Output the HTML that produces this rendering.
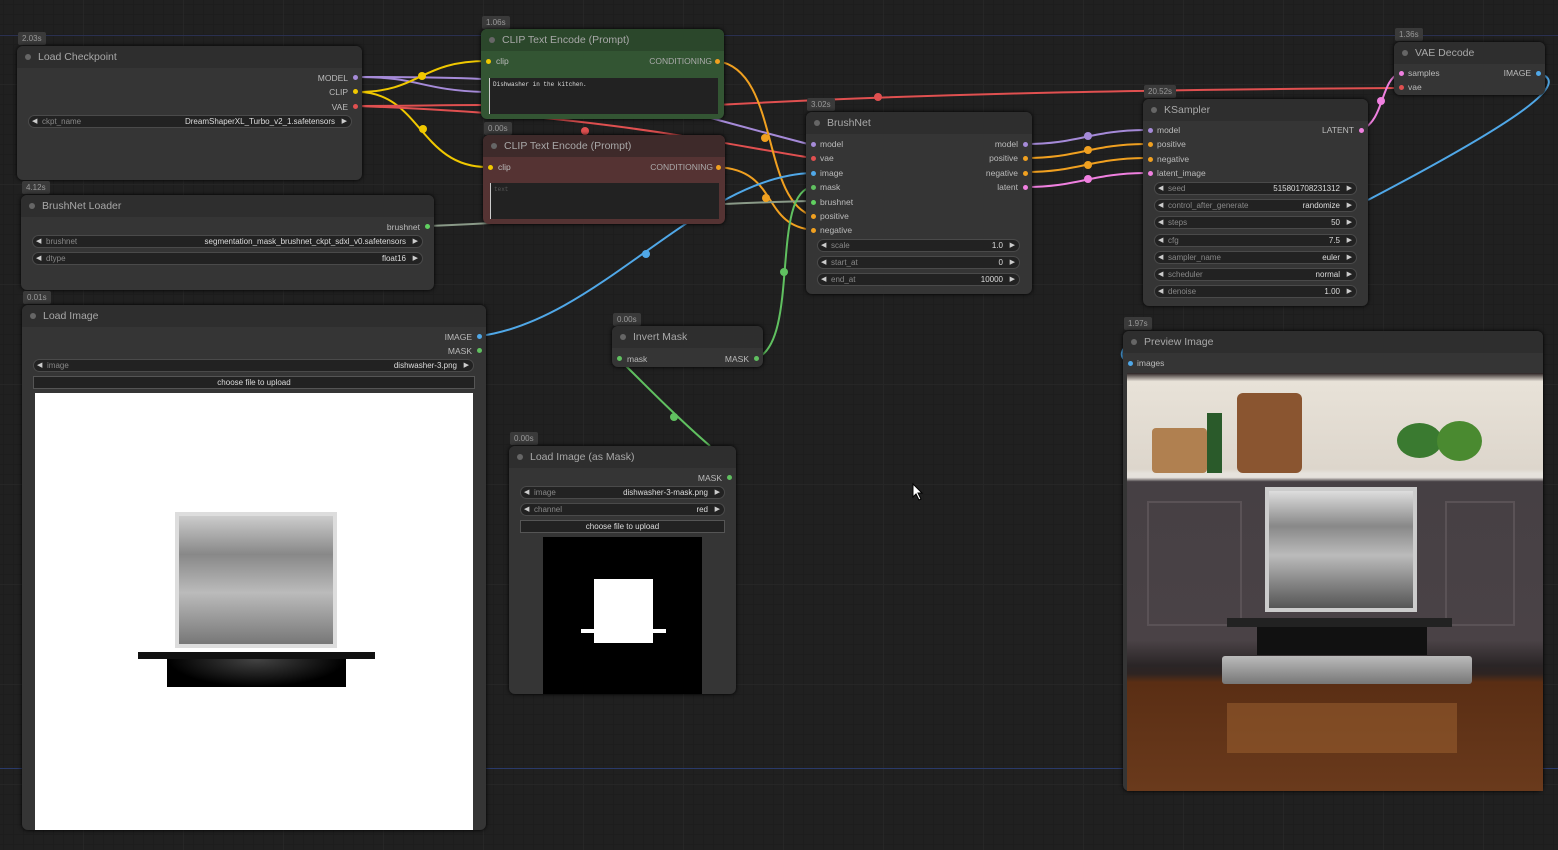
<!DOCTYPE html>
<html><head><meta charset="utf-8"><style>
*{margin:0;padding:0;box-sizing:border-box}
body{width:1558px;height:850px;overflow:hidden;background:#202020;font-family:"Liberation Sans",sans-serif;position:relative;
background-image:linear-gradient(#262626 1px,transparent 1px),linear-gradient(90deg,#262626 1px,transparent 1px),linear-gradient(#1d1d1d 1px,transparent 1px),linear-gradient(90deg,#1d1d1d 1px,transparent 1px);
background-size:100px 100px,100px 100px,10px 10px,10px 10px;background-position:-17px -16px,-17px -16px,-7px -6px,-7px -6px}
.n{position:absolute;background:#353535;border-radius:6px;box-shadow:0 0 4px #000}
.t{height:22px;background:#2e2e2e;border-radius:6px 6px 0 0;color:#a8a8a8;font-size:10.5px;line-height:22px;padding-left:21px;position:relative}
.t:before{content:"";position:absolute;left:8px;top:8px;width:6px;height:6px;border-radius:50%;background:#666}
.b{position:absolute;background:#3a3a3a;color:#999;font-size:8px;height:13px;line-height:13px;padding:0 4px;border-radius:2px}
.s{position:absolute;font-size:8.5px;color:#bbb;line-height:10px}
.d{position:absolute;width:5px;height:5px;border-radius:50%}
.w{position:absolute;height:13px;background:#222;border:1px solid #4a4a4a;border-radius:7px;font-size:8px;line-height:11px;color:#888}
.w .l{position:absolute;left:13px}.w .v{position:absolute;right:16px;color:#ddd}
.w:before{content:"◀";position:absolute;left:3px;color:#ccc;font-size:7px}
.w:after{content:"▶";position:absolute;right:4px;color:#ccc;font-size:7px}
.btn{position:absolute;height:13px;background:#222;border:1px solid #555;font-size:8px;line-height:11px;color:#ddd;text-align:center}
</style></head><body>
<div style="position:absolute;left:0;top:35px;width:1558px;height:1px;background:#2a3050"></div>
<div style="position:absolute;left:0;top:768px;width:1558px;height:1px;background:#2a3a6a"></div>

<svg style="position:absolute;left:0;top:0" width="1558" height="850" fill="none" stroke-width="2">
<path d="M358 77 C420 77,420 90,484 92" stroke="#a58ad8"/>
<path d="M358 77 C600 77,600 90,808 144" stroke="#a58ad8"/>
<path d="M358 92 C420 92,420 61,487 61" stroke="#f0c800"/>
<path d="M358 92 C420 92,420 167,487 167" stroke="#f0c800"/>
<path d="M358 106 C420 106,430 105,484 105" stroke="#e05050"/>
<path d="M358 106 C600 115,700 140,812 158" stroke="#e05050"/>
<path d="M716 105 C900 95,1100 90,1400 88" stroke="#e05050"/>
<path d="M717 61 C780 70,760 200,813 216" stroke="#f0a020"/>
<path d="M717 167 C780 170,760 225,813 230" stroke="#f0a020"/>
<path d="M428 226 C600 220,620 205,813 201" stroke="#8a9a88"/>
<path d="M480 336 C600 320,700 175,813 173" stroke="#50a8e8"/>
<path d="M757 358 C800 340,770 190,813 187" stroke="#60c060"/>
<path d="M618 358 C650 390,680 420,710 446" stroke="#60c060"/>
<path d="M1025 144 C1080 144,1090 130,1148 130" stroke="#a58ad8"/>
<path d="M1025 158 C1080 158,1090 144,1148 144" stroke="#f0a020"/>
<path d="M1025 172 C1080 172,1090 158,1148 158" stroke="#f0a020"/>
<path d="M1025 187 C1080 187,1090 173,1148 173" stroke="#f080e0"/>
<path d="M1361 130 C1385 120,1380 80,1400 73" stroke="#f080e0"/>
<path d="M1537 73 C1570 80,1540 110,1368 200" stroke="#50a8e8"/>
<path d="M1133 341 C1118 350,1118 360,1133 363" stroke="#50a8e8"/>
<g stroke="none">
<circle cx="422" cy="76" r="4" fill="#f0c800"/><circle cx="423" cy="129" r="4" fill="#f0c800"/>
<circle cx="585" cy="131" r="4" fill="#e05050"/><circle cx="878" cy="97" r="4" fill="#e05050"/>
<circle cx="765" cy="138" r="4" fill="#f0a020"/><circle cx="766" cy="198" r="4" fill="#f0a020"/>
<circle cx="646" cy="254" r="4" fill="#50a8e8"/><circle cx="784" cy="272" r="4" fill="#60c060"/>
<circle cx="674" cy="417" r="4" fill="#60c060"/>
<circle cx="1088" cy="136" r="4" fill="#a58ad8"/><circle cx="1088" cy="150" r="4" fill="#f0a020"/>
<circle cx="1088" cy="165" r="4" fill="#f0a020"/><circle cx="1088" cy="179" r="4" fill="#f080e0"/>
<circle cx="1381" cy="101" r="4" fill="#f080e0"/>
</g></svg>

<!-- Load Checkpoint -->
<div class="b" style="left:18px;top:32px">2.03s</div>
<div class="n" style="left:17px;top:46px;width:345px;height:134px"><div class="t">Load Checkpoint</div>
<div class="s" style="right:14px;top:27px">MODEL</div><div class="d" style="right:4px;top:29px;background:#a58ad8"></div>
<div class="s" style="right:14px;top:41px">CLIP</div><div class="d" style="right:4px;top:43px;background:#f0c800"></div>
<div class="s" style="right:14px;top:56px">VAE</div><div class="d" style="right:4px;top:58px;background:#e05050"></div>
<div class="w" style="left:11px;top:69px;width:324px"><span class="l">ckpt_name</span><span class="v">DreamShaperXL_Turbo_v2_1.safetensors</span></div>
</div>

<!-- CLIP green -->
<div class="b" style="left:482px;top:16px">1.06s</div>
<div class="n" style="left:481px;top:29px;width:243px;height:90px;background:#335533"><div class="t" style="background:#2b472b">CLIP Text Encode (Prompt)</div>
<div class="d" style="left:5px;top:30px;background:#f0c800"></div><div class="s" style="left:15px;top:27px">clip</div>
<div class="s" style="right:12px;top:27px;color:#aaa">CONDITIONING</div><div class="d" style="right:4px;top:30px;background:#f0a020"></div>
<div style="position:absolute;left:8px;top:49px;width:229px;height:36px;background:#222;border-left:1px solid #ccc;font-family:'Liberation Mono',monospace;font-size:6px;color:#ddd;padding:3px">Dishwasher in the kitchen.</div>
</div>

<!-- CLIP red -->
<div class="b" style="left:484px;top:122px">0.00s</div>
<div class="n" style="left:483px;top:135px;width:242px;height:89px;background:#553333"><div class="t" style="background:#3e2a2a">CLIP Text Encode (Prompt)</div>
<div class="d" style="left:5px;top:30px;background:#f0c800"></div><div class="s" style="left:15px;top:27px">clip</div>
<div class="s" style="right:12px;top:27px;color:#aaa">CONDITIONING</div><div class="d" style="right:4px;top:30px;background:#f0a020"></div>
<div style="position:absolute;left:7px;top:48px;width:229px;height:36px;background:#222;border-left:1px solid #ccc;font-family:'Liberation Mono',monospace;font-size:6px;color:#555;padding:3px">text</div>
</div>

<!-- BrushNet Loader -->
<div class="b" style="left:22px;top:181px">4.12s</div>
<div class="n" style="left:21px;top:195px;width:413px;height:95px"><div class="t">BrushNet Loader</div>
<div class="s" style="right:14px;top:27px">brushnet</div><div class="d" style="right:4px;top:29px;background:#60d060"></div>
<div class="w" style="left:11px;top:40px;width:391px"><span class="l">brushnet</span><span class="v">segmentation_mask_brushnet_ckpt_sdxl_v0.safetensors</span></div>
<div class="w" style="left:11px;top:57px;width:391px"><span class="l">dtype</span><span class="v">float16</span></div>
</div>

<!-- Load Image -->
<div class="b" style="left:23px;top:291px">0.01s</div>
<div class="n" style="left:22px;top:305px;width:464px;height:525px"><div class="t">Load Image</div>
<div class="s" style="right:14px;top:27px">IMAGE</div><div class="d" style="right:4px;top:29px;background:#50a8e8"></div>
<div class="s" style="right:14px;top:41px">MASK</div><div class="d" style="right:4px;top:43px;background:#60c060"></div>
<div class="w" style="left:11px;top:54px;width:441px"><span class="l">image</span><span class="v">dishwasher-3.png</span></div>
<div class="btn" style="left:11px;top:71px;width:442px">choose file to upload</div>
<div style="position:absolute;left:13px;top:88px;width:438px;height:437px;background:#fff">
 <div style="position:absolute;left:140px;top:119px;width:162px;height:136px;background:linear-gradient(#ccc,#888 30%,#bbb 60%,#777);border:4px solid #ddd"></div>
 <div style="position:absolute;left:103px;top:259px;width:237px;height:7px;background:#111"></div>
 <div style="position:absolute;left:132px;top:266px;width:179px;height:28px;background:radial-gradient(ellipse at 50% 0,#444,#000 70%)"></div>
</div></div>

<!-- Invert Mask -->
<div class="b" style="left:613px;top:313px">0.00s</div>
<div class="n" style="left:612px;top:326px;width:151px;height:41px"><div class="t">Invert Mask</div>
<div class="d" style="left:5px;top:30px;background:#60c060"></div><div class="s" style="left:15px;top:28px">mask</div>
<div class="s" style="right:14px;top:28px">MASK</div><div class="d" style="right:4px;top:30px;background:#60c060"></div></div>

<!-- Load Image Mask -->
<div class="b" style="left:510px;top:432px">0.00s</div>
<div class="n" style="left:509px;top:446px;width:227px;height:248px"><div class="t">Load Image (as Mask)</div>
<div class="s" style="right:14px;top:27px">MASK</div><div class="d" style="right:4px;top:29px;background:#60c060"></div>
<div class="w" style="left:11px;top:40px;width:205px"><span class="l">image</span><span class="v">dishwasher-3-mask.png</span></div>
<div class="w" style="left:11px;top:57px;width:205px"><span class="l">channel</span><span class="v">red</span></div>
<div class="btn" style="left:11px;top:74px;width:205px">choose file to upload</div>
<div style="position:absolute;left:34px;top:91px;width:159px;height:157px;background:#000">
 <div style="position:absolute;left:51px;top:42px;width:59px;height:64px;background:#fff"></div>
 <div style="position:absolute;left:38px;top:92px;width:85px;height:4px;background:#fff"></div></div></div>

<!-- BrushNet -->
<div class="b" style="left:807px;top:98px">3.02s</div>
<div class="n" style="left:806px;top:112px;width:226px;height:182px"><div class="t">BrushNet</div>
<div class="d" style="left:5px;top:30px;background:#a58ad8"></div><div class="s" style="left:14px;top:27px">model</div>
<div class="d" style="left:5px;top:44px;background:#e05050"></div><div class="s" style="left:14px;top:41px">vae</div>
<div class="d" style="left:5px;top:59px;background:#50a8e8"></div><div class="s" style="left:14px;top:56px">image</div>
<div class="d" style="left:5px;top:73px;background:#60c060"></div><div class="s" style="left:14px;top:70px">mask</div>
<div class="d" style="left:5px;top:88px;background:#60d060"></div><div class="s" style="left:14px;top:85px">brushnet</div>
<div class="d" style="left:5px;top:102px;background:#f0a020"></div><div class="s" style="left:14px;top:99px">positive</div>
<div class="d" style="left:5px;top:116px;background:#f0a020"></div><div class="s" style="left:14px;top:113px">negative</div>
<div class="s" style="right:14px;top:27px">model</div><div class="d" style="right:4px;top:30px;background:#a58ad8"></div>
<div class="s" style="right:14px;top:41px">positive</div><div class="d" style="right:4px;top:44px;background:#f0a020"></div>
<div class="s" style="right:14px;top:56px">negative</div><div class="d" style="right:4px;top:59px;background:#f0a020"></div>
<div class="s" style="right:14px;top:70px">latent</div><div class="d" style="right:4px;top:73px;background:#f080e0"></div>
<div class="w" style="left:11px;top:127px;width:203px"><span class="l">scale</span><span class="v">1.0</span></div>
<div class="w" style="left:11px;top:144px;width:203px"><span class="l">start_at</span><span class="v">0</span></div>
<div class="w" style="left:11px;top:161px;width:203px"><span class="l">end_at</span><span class="v">10000</span></div>
</div>

<!-- KSampler -->
<div class="b" style="left:1144px;top:85px">20.52s</div>
<div class="n" style="left:1143px;top:99px;width:225px;height:207px"><div class="t">KSampler</div>
<div class="d" style="left:5px;top:29px;background:#a58ad8"></div><div class="s" style="left:14px;top:26px">model</div>
<div class="d" style="left:5px;top:43px;background:#f0a020"></div><div class="s" style="left:14px;top:40px">positive</div>
<div class="d" style="left:5px;top:58px;background:#f0a020"></div><div class="s" style="left:14px;top:55px">negative</div>
<div class="d" style="left:5px;top:72px;background:#f080e0"></div><div class="s" style="left:14px;top:69px">latent_image</div>
<div class="s" style="right:14px;top:26px">LATENT</div><div class="d" style="right:4px;top:29px;background:#f080e0"></div>
<div class="w" style="left:11px;top:83px;width:203px"><span class="l">seed</span><span class="v">515801708231312</span></div>
<div class="w" style="left:11px;top:100px;width:203px"><span class="l">control_after_generate</span><span class="v">randomize</span></div>
<div class="w" style="left:11px;top:117px;width:203px"><span class="l">steps</span><span class="v">50</span></div>
<div class="w" style="left:11px;top:135px;width:203px"><span class="l">cfg</span><span class="v">7.5</span></div>
<div class="w" style="left:11px;top:152px;width:203px"><span class="l">sampler_name</span><span class="v">euler</span></div>
<div class="w" style="left:11px;top:169px;width:203px"><span class="l">scheduler</span><span class="v">normal</span></div>
<div class="w" style="left:11px;top:186px;width:203px"><span class="l">denoise</span><span class="v">1.00</span></div>
</div>

<!-- VAE Decode -->
<div class="b" style="left:1395px;top:28px">1.36s</div>
<div class="n" style="left:1394px;top:42px;width:151px;height:53px"><div class="t">VAE Decode</div>
<div class="d" style="left:5px;top:29px;background:#f080e0"></div><div class="s" style="left:14px;top:26px">samples</div>
<div class="d" style="left:5px;top:43px;background:#e05050"></div><div class="s" style="left:14px;top:40px">vae</div>
<div class="s" style="right:14px;top:26px">IMAGE</div><div class="d" style="right:4px;top:29px;background:#50a8e8"></div></div>

<!-- Preview Image -->
<div class="b" style="left:1124px;top:317px">1.97s</div>
<div class="n" style="left:1123px;top:331px;width:420px;height:460px"><div class="t">Preview Image</div>
<div class="d" style="left:5px;top:30px;background:#50a8e8"></div><div class="s" style="left:14px;top:27px">images</div>
<div style="position:absolute;left:4px;top:42px;width:416px;height:418px;background:linear-gradient(#2a2222 0,#e8e2d8 2%,#ddd6cc 23%,#e6e2dc 24%,#e6e2dc 25%,#464044 26%,#4a4246 64%,#2a2526 70%,#2e2422 72%,#5a2e14 74%,#6a3a1c 100%);overflow:hidden">
 <div style="position:absolute;left:25px;top:55px;width:55px;height:45px;background:#b08050;border-radius:4px"></div>
 <div style="position:absolute;left:80px;top:40px;width:15px;height:60px;background:#2a5a2a"></div>
 <div style="position:absolute;left:110px;top:20px;width:65px;height:80px;background:#8a5530;border-radius:6px"></div>
 <div style="position:absolute;left:270px;top:50px;width:45px;height:35px;background:#3a7a30;border-radius:50%"></div>
 <div style="position:absolute;left:310px;top:48px;width:45px;height:40px;background:#4a8a30;border-radius:50%"></div>
 <div style="position:absolute;left:20px;top:128px;width:95px;height:125px;border:2px solid #5a5256"></div>
 <div style="position:absolute;left:318px;top:128px;width:70px;height:125px;border:2px solid #5a5256"></div>
 <div style="position:absolute;left:138px;top:114px;width:152px;height:125px;background:linear-gradient(#ddd,#888 30%,#bbb 55%,#555);border:4px solid #ccc"></div>
 <div style="position:absolute;left:100px;top:245px;width:225px;height:9px;background:#222"></div>
 <div style="position:absolute;left:130px;top:254px;width:170px;height:28px;background:#111"></div>
 <div style="position:absolute;left:95px;top:283px;width:250px;height:28px;background:linear-gradient(#bbb,#777);border-radius:3px"></div>
 <div style="position:absolute;left:100px;top:330px;width:230px;height:50px;background:rgba(160,100,50,.5)"></div>
</div></div>

<svg style="position:absolute;left:912px;top:483px" width="12" height="18"><path d="M1 1 L1 14 L4 11 L7 17 L9 16 L6 10 L10 10 Z" fill="#fff" stroke="#000"/></svg>
</body></html>
